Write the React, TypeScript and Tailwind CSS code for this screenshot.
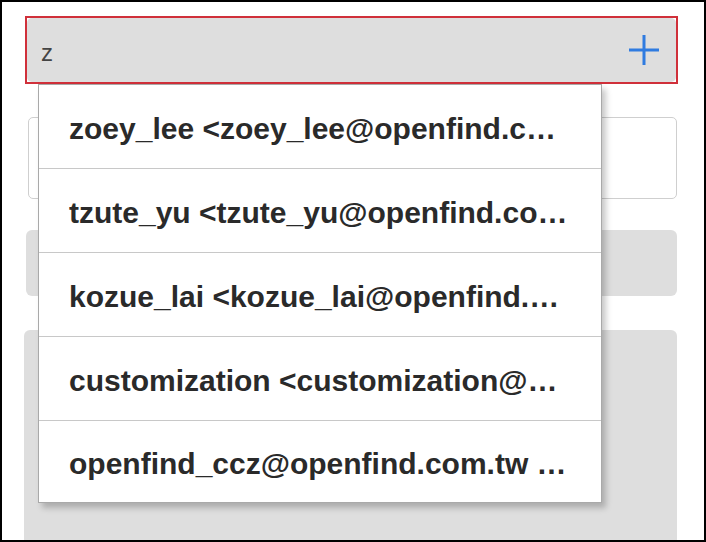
const suggestions = [
  "zoey_lee <zoey_lee@openfind.c…",
  "tzute_yu <tzute_yu@openfind.co…",
  "kozue_lai <kozue_lai@openfind.…",
  "customization <customization@…",
  "openfind_ccz@openfind.com.tw …",
];

const PlusIcon = () => (
  <svg width="32" height="32" viewBox="0 0 32 32" fill="none">
    <path d="M16 1v30M1 16h30" stroke="#2f7be0" strokeWidth="3" />
  </svg>
);

const App = () => {
  return (
    <div className="relative w-[706px] h-[542px] overflow-hidden border-2 border-black bg-white font-['Liberation_Sans',Arial,sans-serif]">
      <div className="flex flex-col pt-[14px] pl-[23px]">
        {/* search field */}
        <div className="w-[653px] h-[68px] border-2 border-[#d0303a]">
          <div className="flex h-full items-center justify-between rounded-[5px] bg-[#dedede] pl-[14px] pr-[16px]">
            <span className="pt-[6px] text-[24px] text-[#444] leading-none">z</span>
            <PlusIcon />
          </div>
        </div>

        {/* form behind */}
        <div className="ml-[3px] mt-[33px] w-[649px] h-[82px] rounded-[5px] border border-[#cfcfcf] bg-white" />
        <div className="ml-[1px] mt-[31px] w-[651px] h-[66px] rounded-[6px] bg-[#dedede]" />
        <div className="ml-[-1px] mt-[34px] w-[653px] h-[230px] rounded-[6px] bg-[#dedede]" />
      </div>

      {/* autocomplete list */}
      <div className="absolute left-[36px] top-[82px] w-[564px] border border-[#a9a9a9] bg-white shadow-[4px_5px_6px_rgba(0,0,0,0.22)]">
        {suggestions.map((s, i) => (
          <div
            key={i}
            className={`flex items-center pl-[30px] pt-[4px] text-[30px] font-bold text-[#2a2a2a] whitespace-nowrap ${
              i < suggestions.length - 1 ? "h-[84px] border-b border-[#c8c8c8]" : "h-[81px]"
            }`}
          >
            {s}
          </div>
        ))}
      </div>
    </div>
  );
};

export default App;
